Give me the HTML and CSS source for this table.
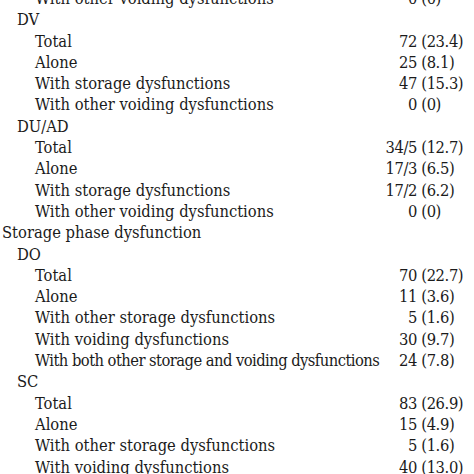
FILE: index.html
```html
<!DOCTYPE html>
<html>
<head>
<meta charset="utf-8">
<link rel="stylesheet" href="styles.css">
</head>
<body>
<div class="table">
  <div class="row"><span class="label l2">With other voiding dysfunctions</span><span class="num">0</span><span class="pct"> (0)</span></div>
  <div class="row"><span class="label l1">DV</span></div>
  <div class="row"><span class="label l2">Total</span><span class="num">72</span><span class="pct"> (23.4)</span></div>
  <div class="row"><span class="label l2">Alone</span><span class="num">25</span><span class="pct"> (8.1)</span></div>
  <div class="row"><span class="label l2">With storage dysfunctions</span><span class="num">47</span><span class="pct"> (15.3)</span></div>
  <div class="row"><span class="label l2">With other voiding dysfunctions</span><span class="num">0</span><span class="pct"> (0)</span></div>
  <div class="row"><span class="label l1">DU/AD</span></div>
  <div class="row"><span class="label l2">Total</span><span class="num">34/5</span><span class="pct"> (12.7)</span></div>
  <div class="row"><span class="label l2">Alone</span><span class="num">17/3</span><span class="pct"> (6.5)</span></div>
  <div class="row"><span class="label l2">With storage dysfunctions</span><span class="num">17/2</span><span class="pct"> (6.2)</span></div>
  <div class="row"><span class="label l2">With other voiding dysfunctions</span><span class="num">0</span><span class="pct"> (0)</span></div>
  <div class="row"><span class="label l0">Storage phase dysfunction</span></div>
  <div class="row"><span class="label l1">DO</span></div>
  <div class="row"><span class="label l2">Total</span><span class="num">70</span><span class="pct"> (22.7)</span></div>
  <div class="row"><span class="label l2">Alone</span><span class="num">11</span><span class="pct"> (3.6)</span></div>
  <div class="row"><span class="label l2">With other storage dysfunctions</span><span class="num">5</span><span class="pct"> (1.6)</span></div>
  <div class="row"><span class="label l2">With voiding dysfunctions</span><span class="num">30</span><span class="pct"> (9.7)</span></div>
  <div class="row"><span class="label l2 tight">With both other storage and voiding dysfunctions</span><span class="num">24</span><span class="pct"> (7.8)</span></div>
  <div class="row"><span class="label l1">SC</span></div>
  <div class="row"><span class="label l2">Total</span><span class="num">83</span><span class="pct"> (26.9)</span></div>
  <div class="row"><span class="label l2">Alone</span><span class="num">15</span><span class="pct"> (4.9)</span></div>
  <div class="row"><span class="label l2">With other storage dysfunctions</span><span class="num">5</span><span class="pct"> (1.6)</span></div>
  <div class="row"><span class="label l2">With voiding dysfunctions</span><span class="num">40</span><span class="pct"> (13.0)</span></div>
</div>
</body>
</html>
```
FILE: styles.css
```css
html, body {
  margin: 0;
  padding: 0;
  background: #ffffff;
}
body {
  width: 474px;
  height: 474px;
  overflow: hidden;
}
.table {
  margin-top: -12px;
  font-family: "DejaVu Serif Condensed", "DejaVu Serif", serif;
  font-stretch: condensed;
  font-size: 16.4px;
  color: #1b1b1b;
}
.row {
  display: grid;
  grid-template-columns: 383px 34px auto;
  height: 21.3px;
  line-height: 21.3px;
  white-space: nowrap;
}
.label { min-width: 0; }
.label.l0 { padding-left: 2px; }
.label.l1 { padding-left: 17px; }
.label.l2 { padding-left: 35px; }
.label.tight { letter-spacing: -0.55px; }
.num {
  text-align: right;
  letter-spacing: -0.4px;
}
.pct {
  white-space: pre;
  letter-spacing: -0.4px;
}
```
